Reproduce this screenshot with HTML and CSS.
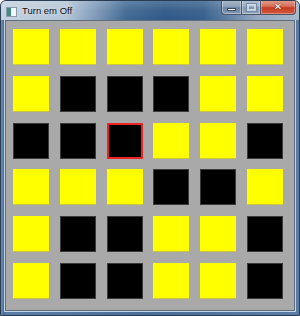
FILE: index.html
```html
<!DOCTYPE html>
<html>
<head>
<meta charset="utf-8">
<link rel="stylesheet" href="styles.css">
</head>
<body>
<div class="window">
  <div class="titlebar">
    <svg class="appicon" width="11" height="10" viewBox="0 0 11 10">
      <rect x="0.5" y="0.5" width="10" height="9" fill="#e8eef2" stroke="#8a9aa8"/>
      <rect x="1" y="1" width="4" height="8" fill="#3d8c7c"/>
      <rect x="5" y="1" width="5" height="8" fill="#f4f6f8"/>
    </svg>
    <span class="title">Turn em Off</span>
    <div class="controls">
      <div class="cbtn min"><span class="minbar"></span></div>
      <div class="cbtn max"><span class="maxbox"></span></div>
      <div class="cbtn close"><span class="x">&#x2715;</span></div>
    </div>
  </div>
  <div class="client">
    <div class="board">
      <div class="cell on"></div><div class="cell on"></div><div class="cell on"></div><div class="cell on"></div><div class="cell on"></div><div class="cell on"></div>
      <div class="cell on"></div><div class="cell off"></div><div class="cell off"></div><div class="cell off"></div><div class="cell on"></div><div class="cell on"></div>
      <div class="cell off"></div><div class="cell off"></div><div class="cell off sel"></div><div class="cell on"></div><div class="cell on"></div><div class="cell off"></div>
      <div class="cell on"></div><div class="cell on"></div><div class="cell on"></div><div class="cell off"></div><div class="cell off"></div><div class="cell on"></div>
      <div class="cell on"></div><div class="cell off"></div><div class="cell off"></div><div class="cell on"></div><div class="cell on"></div><div class="cell off"></div>
      <div class="cell on"></div><div class="cell off"></div><div class="cell off"></div><div class="cell on"></div><div class="cell on"></div><div class="cell off"></div>
    </div>
  </div>
</div>
</body>
</html>
```
FILE: styles.css
```css
html, body {
  margin: 0;
  padding: 0;
  background: #ffffff;
}
.window {
  width: 300px;
  height: 316px;
  box-sizing: border-box;
  border: 1px solid #2a3c52;
  border-radius: 6px 6px 0 0;
  padding: 0 4px 4px 4px;
  display: flex;
  flex-direction: column;
  background:
    linear-gradient(to right, #6f8fb4 0px, #4a6c98 3px, #5a7ca6 5px, #4b6d99 50%, #5a7ca4 100%);
  overflow: hidden;
}
.titlebar {
  height: 19px;
  margin: 0 -4px;
  padding-left: 5px;
  display: flex;
  align-items: flex-start;
  background:
    linear-gradient(to bottom, rgba(255,255,255,0.18) 0%, rgba(255,255,255,0.05) 50%, rgba(0,0,0,0) 100%),
    linear-gradient(to right, #c4d2e1 0%, #b3c4d7 22%, #7d98b8 32%, #3f6892 42%, #2e5886 55%, #365f8c 68%, #5e7ea3 76%, #93a8bf 86%, #a6b7c9 100%);
  position: relative;
}
.appicon {
  margin-top: 6px;
  flex: none;
}
.title {
  margin-left: 5px;
  margin-top: 4px;
  font-family: "Liberation Sans", Arial, sans-serif;
  font-size: 9.5px;
  line-height: 12px;
  color: #111;
  text-shadow: 0 0 4px rgba(255,255,255,0.7);
}
.controls {
  margin-left: auto;
  margin-right: 3px;
  margin-top: -1px;
  display: flex;
}
.cbtn {
  height: 15px;
  box-sizing: border-box;
  border: 1px solid #4a5668;
  border-top: none;
  display: flex;
  align-items: center;
  justify-content: center;
}
.min {
  width: 20px;
  border-radius: 0 0 0 4px;
  border-right: none;
  background: linear-gradient(to bottom, #a9b8c9 0%, #8ea2ba 45%, #6d86a4 55%, #7f96b2 100%);
  box-shadow: inset 0 0 0 1px rgba(255,255,255,0.35);
}
.max {
  width: 19px;
  border-right: none;
  background: linear-gradient(to bottom, #b4c2d1 0%, #9caec3 45%, #8196b0 55%, #90a4bb 100%);
  box-shadow: inset 0 0 0 1px rgba(255,255,255,0.35);
}
.close {
  width: 36px;
  border-radius: 0 0 4px 0;
  background: linear-gradient(to bottom, #e5a08f 0%, #d86e58 45%, #c43b22 55%, #d45a3c 100%);
  box-shadow: inset 0 0 0 1px rgba(255,255,255,0.3);
}
.minbar {
  width: 9px;
  height: 3px;
  background: #ffffff;
  border: 1px solid #3c4a5e;
  box-sizing: border-box;
  margin-top: 4px;
}
.maxbox {
  width: 9px;
  height: 7px;
  box-sizing: border-box;
  border: 2px solid #d8e0ea;
  outline: 1px solid #6f84a0;
  opacity: 0.8;
}
.x {
  font-family: "DejaVu Sans", sans-serif;
  font-size: 10px;
  font-weight: bold;
  line-height: 10px;
  color: #ffffff;
  text-shadow: 0 0 1px #5a2010, 0 0 1px #5a2010;
}
.client {
  flex: 1;
  background: #a9a9a9;
  border: 1px solid #5e6e80;
  box-shadow: 0 0 0 1px #c4d3e3;
  padding: 8px 0 0 7px;
}
.board {
  display: grid;
  grid-template-columns: repeat(6, 36px);
  grid-auto-rows: 36px;
  gap: 10.8px;
}
.cell {
  box-sizing: border-box;
}
.on {
  background: #ffff00;
  box-shadow: inset 0 -1px 0 #c8c840;
}
.off {
  background: #000000;
  box-shadow: inset 0 0 0 1px #3a3a3a;
}
.sel {
  box-shadow: inset 0 0 0 2px #ec2424;
}
```
